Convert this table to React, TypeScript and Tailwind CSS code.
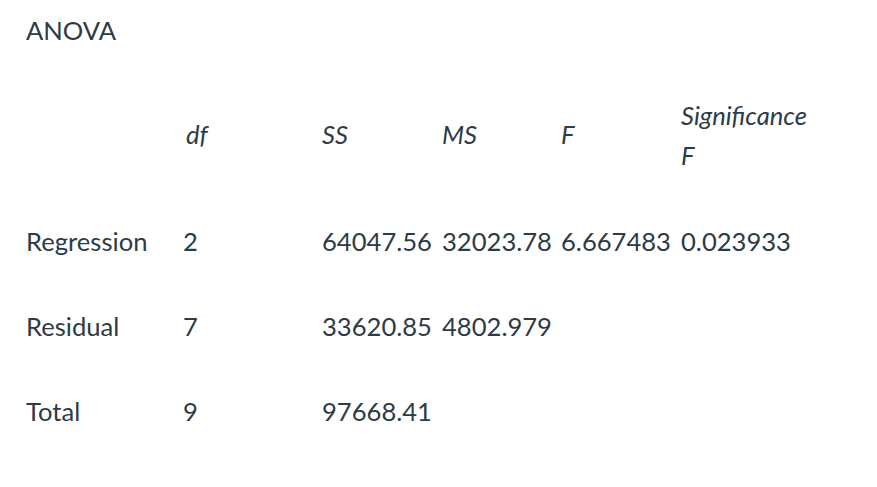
const rows = [
  { label: "Regression", df: "2", ss: "64047.56", ms: "32023.78", f: "6.667483", sig: "0.023933" },
  { label: "Residual", df: "7", ss: "33620.85", ms: "4802.979", f: "", sig: "" },
  { label: "Total", df: "9", ss: "97668.41", ms: "", f: "", sig: "" },
];

const cols = "grid grid-cols-[158px_139px_120px_119px_120px_150px]";

export default function App() {
  return (
    <div className="min-h-[487px] w-[877px] bg-white pl-[25px] pt-[10px] text-[25.6px] text-[#2d3b45]" style={{ fontFamily: "Lato, 'Noto Sans', sans-serif" }}>
      <h2 className="pl-px leading-[40px]">ANOVA</h2>

      <div className={`${cols} mt-[21px] h-[127px] items-center italic`}>
        <div />
        <div className="pl-[3px]">df</div>
        <div>SS</div>
        <div>MS</div>
        <div>F</div>
        <div className="leading-[40px]">
          <span className="block">Significance</span>
          <span className="block">F</span>
        </div>
      </div>

      {rows.map((r) => (
        <div key={r.label} className={`${cols} h-[85px] items-center leading-[40px] whitespace-nowrap`}>
          <div className="pl-px">{r.label}</div>
          <div>{r.df}</div>
          <div>{r.ss}</div>
          <div>{r.ms}</div>
          <div>{r.f}</div>
          <div>{r.sig}</div>
        </div>
      ))}
    </div>
  );
}
